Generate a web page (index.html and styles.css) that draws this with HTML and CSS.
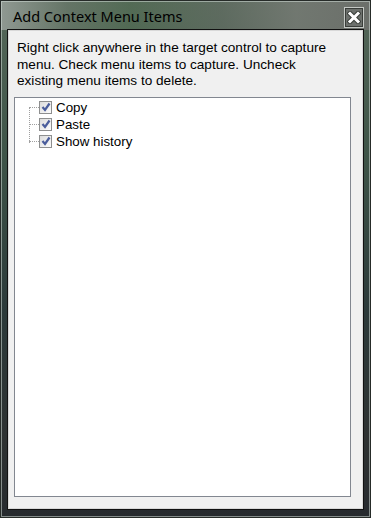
FILE: index.html
```html
<!DOCTYPE html>
<html>
<head>
    <meta charset="utf-8">
    <title>Add Context Menu Items</title>
    <link rel="stylesheet" href="styles.css">
</head>
<body>

<div class="window">
    <div class="titlebar">
        <div class="title">Add Context Menu Items</div>
        <div class="close-btn">
            <svg width="14" height="13" viewBox="0 0 14 13">
                <path d="M3 2.5 L11 10.5 M11 2.5 L3 10.5" stroke="#3a3f3a" stroke-width="5" stroke-linecap="square"/>
                <path d="M3 2.5 L11 10.5 M11 2.5 L3 10.5" stroke="#ffffff" stroke-width="3" stroke-linecap="square"/>
            </svg>
        </div>
    </div>

    <div class="client">
        <div class="hint">Right click anywhere in the target control to capture<br>menu. Check menu items to capture. Uncheck<br>existing menu items to delete.</div>

        <div class="tree">
            <div class="tree-lines"></div>
            <div class="node">
                <span class="branch"></span>
                <span class="check">
                    <svg width="10" height="10" viewBox="0 0 10 10"><path d="M1.5 5 L4 8 L8.5 1.5" fill="none" stroke="#4a5d9c" stroke-width="2.2"/></svg>
                </span>
                <span class="label">Copy</span>
            </div>
            <div class="node">
                <span class="branch"></span>
                <span class="check">
                    <svg width="10" height="10" viewBox="0 0 10 10"><path d="M1.5 5 L4 8 L8.5 1.5" fill="none" stroke="#4a5d9c" stroke-width="2.2"/></svg>
                </span>
                <span class="label">Paste</span>
            </div>
            <div class="node">
                <span class="branch"></span>
                <span class="check">
                    <svg width="10" height="10" viewBox="0 0 10 10"><path d="M1.5 5 L4 8 L8.5 1.5" fill="none" stroke="#4a5d9c" stroke-width="2.2"/></svg>
                </span>
                <span class="label">Show history</span>
            </div>
        </div>
    </div>
</div>

</body>
</html>
```

FILE: styles.css
```css
html, body {
    margin: 0;
    padding: 0;
    height: 100%;
}

body {
    background: #1e2622;
}

/* window frame, blurred aero glass look */
.window {
    box-sizing: border-box;
    width: 371px;
    height: 518px;
    display: flex;
    flex-direction: column;
    border: 1px solid #262b28;
    box-shadow: inset 0 0 0 1px rgba(210, 220, 215, 0.55);
    background:
        linear-gradient(90deg, rgba(150, 158, 152, 0.9) 0%, rgba(110, 125, 110, 0.6) 18%, rgba(80, 110, 80, 0.5) 35%, rgba(100, 110, 100, 0.6) 60%, rgba(120, 124, 118, 0.8) 80%, rgba(110, 112, 108, 0.9) 100%) top / 100% 29px no-repeat,
        linear-gradient(180deg, #56685a 0%, #3e5448 30%, #2c3a3a 60%, #2e3232 85%, #262a2e 100%);
}

.titlebar {
    height: 28px;
    display: flex;
    align-items: center;
    justify-content: space-between;
    padding: 0 6px 0 12px;
}

.title {
    font-family: "Noto Sans", "Open Sans", sans-serif;
    font-size: 14.5px;
    color: #000;
    margin-top: 2px;
}

.close-btn {
    width: 18px;
    height: 19px;
    margin-top: 4px;
    border: 1px solid #c4c8c4;
    box-shadow: inset 0 0 0 1px #3a3e3a;
    background: #6c706c;
    display: flex;
    align-items: center;
    justify-content: center;
}

.client {
    flex: 1;
    margin: 0 6px 7px 6px;
    border: 1px solid #111;
    box-shadow: inset 0 0 0 1px #d8d8d8;
    background: #f0f0f0;
    padding: 10px 12px 12px 6px;
    display: flex;
    flex-direction: column;
}

.hint {
    font-family: "Liberation Sans", Arial, sans-serif;
    font-size: 13.6px;
    line-height: 16.5px;
    color: #000;
    white-space: nowrap;
    padding-left: 3px;
    margin-bottom: 7px;
}

.tree {
    flex: 1;
    position: relative;
    background: #fff;
    border: 1px solid #828790;
    padding: 1px 0 0 14px;
}

.tree-lines {
    position: absolute;
    left: 14px;
    top: 10px;
    height: 35px;
    border-left: 1px dotted #a0a0a0;
}

.node {
    display: flex;
    align-items: center;
    height: 17px;
}

.branch {
    width: 10px;
    border-top: 1px dotted #a0a0a0;
}

.check {
    box-sizing: border-box;
    width: 13px;
    height: 13px;
    border: 1px solid #8e8f8f;
    background: linear-gradient(135deg, #dcdcdc, #fcfcfc);
    display: flex;
    align-items: center;
    justify-content: center;
}

.label {
    font-family: "Liberation Sans", Arial, sans-serif;
    font-size: 13.33px;
    color: #000;
    margin-left: 4px;
}
```
